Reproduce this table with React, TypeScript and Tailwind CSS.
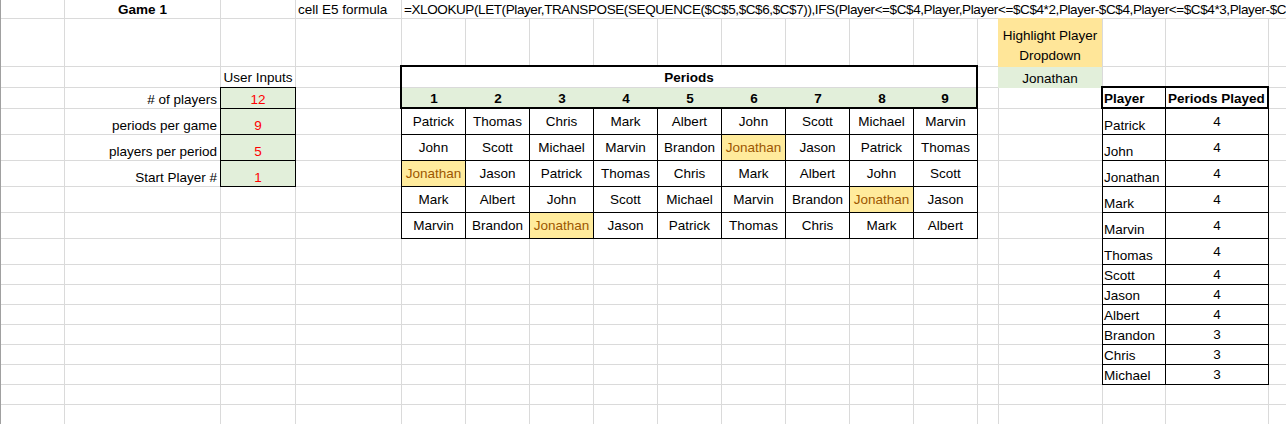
import React from "react";

const selected = "Jonathan";

const schedule = [
    ["Patrick", "Thomas", "Chris", "Mark", "Albert", "John", "Scott", "Michael", "Marvin"],
    ["John", "Scott", "Michael", "Marvin", "Brandon", "Jonathan", "Jason", "Patrick", "Thomas"],
    ["Jonathan", "Jason", "Patrick", "Thomas", "Chris", "Mark", "Albert", "John", "Scott"],
    ["Mark", "Albert", "John", "Scott", "Michael", "Marvin", "Brandon", "Jonathan", "Jason"],
    ["Marvin", "Brandon", "Jonathan", "Jason", "Patrick", "Thomas", "Chris", "Mark", "Albert"],
];

const roster = [
    "Patrick", "John", "Jonathan", "Mark", "Marvin", "Thomas",
    "Scott", "Jason", "Albert", "Brandon", "Chris", "Michael",
];

const inputs = [
    { label: "# of players", value: "12", row: "row-start-4", h: "h-[21px]" },
    { label: "periods per game", value: "9", row: "row-start-5", h: "h-[26px]" },
    { label: "players per period", value: "5", row: "row-start-6", h: "h-[26px]" },
    { label: "Start Player #", value: "1", row: "row-start-7", h: "h-[26px]" },
];

const formula =
    "=XLOOKUP(LET(Player,TRANSPOSE(SEQUENCE($C$5,$C$6,$C$7)),IFS(Player<=$C$4,Player,Player<=$C$4*2,Player-$C$4,Player<=$C$4*3,Player-$C$4*2,Player<=$C$4*4,Player-$C$4*3)),Players[#],Players[Name])";

const grid = "border-r border-b border-[#dadada]";

export default function App() {
    // periods played per player, straight from the schedule
    const played = roster.map((name) => ({
        name,
        count: schedule.flat().filter((n) => n === name).length,
    }));

    return (
        <div className="w-[1286px] h-[424px] overflow-hidden bg-white text-black text-[13.5px] leading-[15px] font-['Liberation_Sans',Arial,sans-serif]">
            <div className="grid w-max border-l border-[#a0a0a0] grid-cols-[64px_156px_75px_106px_repeat(9,64px)_21px_104px_63px_103px_64px] grid-rows-[19px_48px_21px_21px_repeat(6,26px)_repeat(8,20px)] auto-rows-[20px]">
                {/* empty sheet cells fill whatever is left */}
                {Array.from({ length: 324 }).map((_, i) => (
                    <div key={i} className={grid} />
                ))}

                {/* row 1 */}
                <div className={`col-start-2 row-start-1 flex items-end justify-center pb-px font-bold ${grid}`}>
                    Game 1
                </div>
                <div className={`col-start-4 row-start-1 flex items-end pl-[2px] pb-px whitespace-nowrap ${grid}`}>
                    cell E5 formula
                </div>
                <div className="col-start-5 col-span-14 row-start-1 flex items-end overflow-hidden whitespace-nowrap border-b border-[#dadada] pl-[2px] pb-px tracking-[-0.4px]">
                    {formula}
                </div>

                {/* user inputs */}
                <div className={`col-start-3 row-start-3 flex items-end justify-center pb-[2px] whitespace-nowrap ${grid}`}>
                    User Inputs
                </div>
                {inputs.map((item) => (
                    <div
                        key={item.label}
                        className={`col-start-2 ${item.row} flex items-end justify-end pr-[3px] pb-px whitespace-nowrap ${grid}`}
                    >
                        {item.label}
                    </div>
                ))}
                <div className="col-start-3 row-start-4 row-span-4 -ml-px -mt-px flex flex-col border-l border-t border-black bg-[#e2efda]">
                    {inputs.map((item) => (
                        <div
                            key={item.label}
                            className={`${item.h} flex items-end justify-center border-r border-b border-black pb-px text-[#ff0000]`}
                        >
                            {item.value}
                        </div>
                    ))}
                </div>

                {/* periods header */}
                <div className="col-start-5 col-span-9 row-start-3 row-span-2 -ml-[2px] -mt-[2px] flex flex-col border-2 border-black font-bold">
                    <div className="h-[21px] flex items-end justify-center border-b border-[#dadada] pb-[2px]">
                        Periods
                    </div>
                    <div className="flex-1 grid grid-cols-[repeat(8,64px)_1fr] bg-[#e2efda]">
                        {schedule[0].map((_, i) => (
                            <div key={i} className="flex items-end justify-center pb-px">
                                {i + 1}
                            </div>
                        ))}
                    </div>
                </div>

                {/* schedule */}
                <div className="col-start-5 col-span-9 row-start-5 row-span-5 -ml-px grid grid-cols-[repeat(9,64px)] grid-rows-[repeat(5,26px)] border-l border-black">
                    {schedule.flat().map((name, i) => (
                        <div
                            key={i}
                            className={
                                name === selected
                                    ? "flex items-center justify-center whitespace-nowrap border-r border-b border-black bg-[#ffeb9c] text-[#9c5700]"
                                    : "flex items-center justify-center whitespace-nowrap border-r border-b border-black"
                            }
                        >
                            {name}
                        </div>
                    ))}
                </div>

                {/* highlight dropdown */}
                <div className="col-start-15 row-start-2 -ml-px -mt-px flex flex-col items-center justify-end border-r border-[#dadada] bg-[#ffe699] pb-px leading-[20px]">
                    <div>Highlight Player</div>
                    <div>Dropdown</div>
                </div>
                <div className="col-start-15 row-start-3 -ml-px flex items-end justify-center border-r border-[#dadada] bg-[#e2efda] pb-[2px]">
                    {selected}
                </div>

                {/* periods played */}
                <div className="col-start-16 col-span-2 row-start-4 -ml-[2px] -mt-[2px] flex border-2 border-black font-bold">
                    <div className="w-[63px] flex items-end border-r border-black pl-px pb-px">Player</div>
                    <div className="flex-1 flex items-end pl-[2px] pb-px whitespace-nowrap">Periods Played</div>
                </div>
                <div className="col-start-16 col-span-2 row-start-5 row-span-12 -ml-px flex flex-col border-l border-black">
                    {played.map((p, i) => (
                        <div key={p.name} className={i < 6 ? "h-[26px] flex" : "h-[20px] flex"}>
                            <div className="w-[63px] flex items-end border-r border-b border-black pl-px pb-px">
                                {p.name}
                            </div>
                            <div className="flex-1 flex items-center justify-center border-r border-b border-black">
                                {p.count}
                            </div>
                        </div>
                    ))}
                </div>
            </div>
        </div>
    );
}
